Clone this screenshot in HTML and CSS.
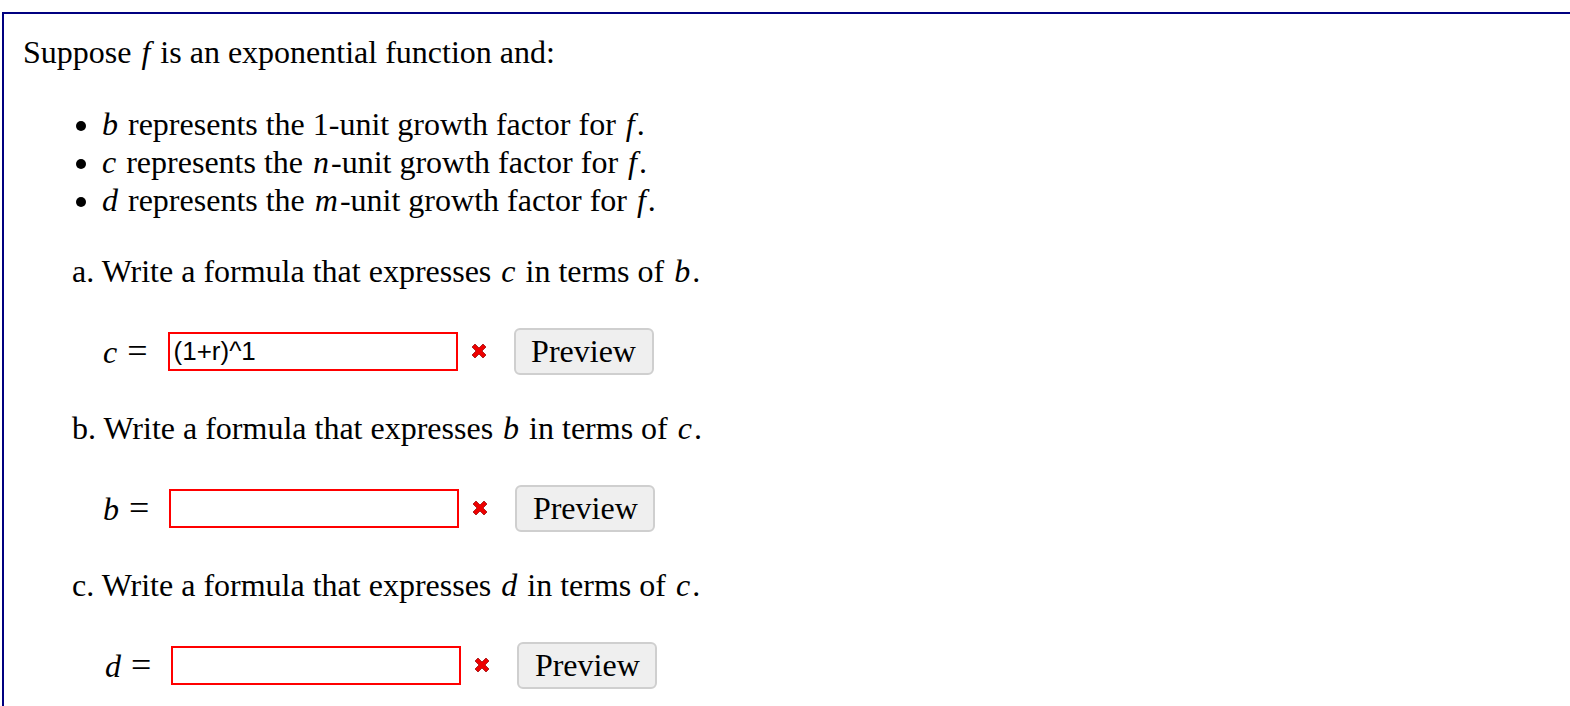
FILE: index.html
```html
<!DOCTYPE html>
<html>
<head>
  <title>Exponential growth factors</title>
  <link rel="stylesheet" href="styles.css">
</head>
<body>
  <div class="problem">
    <p class="intro">Suppose <i class="mv">f</i> is an exponential function and:</p>

    <ul class="facts">
      <li><i class="mv">b</i> represents the 1-unit growth factor for <i class="mv">f</i>.</li>
      <li><i class="mv">c</i> represents the <i class="mv">n</i>-unit growth factor for <i class="mv">f</i>.</li>
      <li><i class="mv">d</i> represents the <i class="mv">m</i>-unit growth factor for <i class="mv">f</i>.</li>
    </ul>

    <div class="parts">
      <p class="part-text">a. Write a formula that expresses <i class="mv">c</i> in terms of <i class="mv">b</i>.</p>
      <div class="answer-row">
        <span class="answer-label"><i class="mv">c</i><span class="eq">=</span></span>
        <input type="text" class="answer-box" value="(1+r)^1">
        <svg class="wrong" width="16" height="16" viewBox="0 0 16 16"><polygon points="1,4 4,1 8,5 12,1 15,4 11,8 15,12 12,15 8,11 4,15 1,12 5,8"/></svg>
        <button type="button" class="preview">Preview</button>
      </div>

      <p class="part-text">b. Write a formula that expresses <i class="mv">b</i> in terms of <i class="mv">c</i>.</p>
      <div class="answer-row">
        <span class="answer-label"><i class="mv">b</i><span class="eq">=</span></span>
        <input type="text" class="answer-box" value="">
        <svg class="wrong" width="16" height="16" viewBox="0 0 16 16"><polygon points="1,4 4,1 8,5 12,1 15,4 11,8 15,12 12,15 8,11 4,15 1,12 5,8"/></svg>
        <button type="button" class="preview">Preview</button>
      </div>

      <p class="part-text">c. Write a formula that expresses <i class="mv">d</i> in terms of <i class="mv">c</i>.</p>
      <div class="answer-row">
        <span class="answer-label"><i class="mv wide">d</i><span class="eq">=</span></span>
        <input type="text" class="answer-box" value="">
        <svg class="wrong" width="16" height="16" viewBox="0 0 16 16"><polygon points="1,4 4,1 8,5 12,1 15,4 11,8 15,12 12,15 8,11 4,15 1,12 5,8"/></svg>
        <button type="button" class="preview">Preview</button>
      </div>
    </div>
  </div>
</body>
</html>
```

FILE: styles.css
```css
/* Reset default margin and padding */
body, p, ul, li {
  margin: 0;
  padding: 0;
}

body {
  background-color: #fff;
  font-family: "Liberation Serif", "Times New Roman", serif;
  font-size: 32px;
  line-height: 38px;
  color: #000;
  overflow: hidden;
}

/* Problem frame, runs off the right and bottom of the window */
.problem {
  margin: 12px -40px 0 2px;
  border: 2px solid #000080;
  padding: 19px 0 80px 19px;
}

.mv {
  font-style: italic;
  padding: 0 2px;
}

.facts {
  margin-top: 34px;
  padding-left: 79px;
  list-style: disc;
}

.facts .mv:first-child {
  padding-left: 0;
}

.parts {
  padding-left: 49px;
}

.part-text {
  margin-top: 33px;
}

.answer-row {
  display: flex;
  align-items: center;
  height: 48px;
  margin-top: 37px;
  padding-left: 31px;
}

.answer-row + .part-text {
  margin-top: 34px;
}

.answer-label {
  display: flex;
  align-items: baseline;
}

.answer-label .mv {
  padding: 0;
}

.answer-label .wide {
  padding-left: 2px;
}

.eq {
  font-size: 36px;
  margin: 0 20px 0 10px;
}

.answer-box {
  width: 290px;
  height: 39px;
  box-sizing: border-box;
  border: 2px solid #f00;
  padding: 0 4px;
  margin: 0;
  font-family: "Liberation Sans", Arial, sans-serif;
  font-size: 26px;
  color: #000;
  outline: none;
}

.wrong {
  margin-left: 13px;
  fill: #ee0000;
  stroke: #900000;
  stroke-width: 0.7;
}

.preview {
  margin-left: 27px;
  width: 140px;
  height: 47px;
  box-sizing: border-box;
  background-color: #efefef;
  border: 2px solid #cfcfcf;
  border-radius: 6px;
  font-family: "Liberation Serif", "Times New Roman", serif;
  font-size: 32px;
  color: #000;
  padding: 0;
  cursor: pointer;
}
```
